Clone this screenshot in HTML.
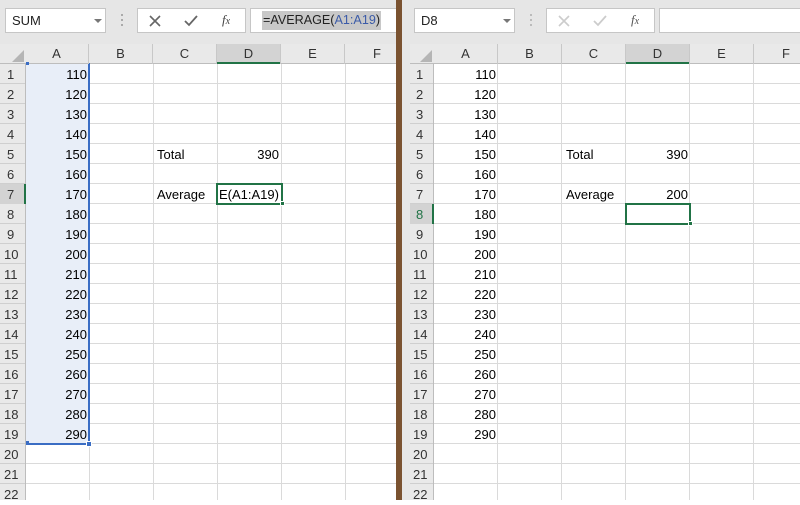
<!DOCTYPE html>
<html><head><meta charset="utf-8"><style>
*{margin:0;padding:0;box-sizing:border-box}
body{width:800px;height:500px;overflow:hidden;background:#fff;font-family:"Liberation Sans",sans-serif;font-size:13px;color:#000;position:relative}
.a{position:absolute}
.tb{background:#e6e6e6}
.box{position:absolute;background:#fff;border:1px solid #c6c6c6}
.hdr{position:absolute;background:#e9e9e9;color:#333;font-size:13px}
.grid{position:absolute;background-image:repeating-linear-gradient(to right,transparent 0 63px,#dadada 63px 64px),repeating-linear-gradient(to bottom,transparent 0 19px,#dadada 19px 20px)}
.n{position:absolute;width:60px;text-align:right;height:20px;line-height:21px}
.rh{position:absolute;height:20px;line-height:21px;font-size:13px;color:#333}
.ch{position:absolute;top:44px;height:20px;line-height:20px;text-align:center;width:64px;border-right:1px solid #c8c8c8;color:#333}
.t{position:absolute;height:20px;line-height:21px}
</style></head><body>
<div class="a tb" style="left:0;top:0;width:800px;height:44px"></div>
<div class="box" style="left:5px;top:8px;width:101px;height:25px"><span class="a" style="left:6px;top:4px;font-size:13px;color:#222">SUM</span><span class="a" style="left:88px;top:10px;border-left:4px solid transparent;border-right:4px solid transparent;border-top:4px solid #777"></span></div>
<div class="a" style="left:121px;top:14px;width:2px;height:14px;background:repeating-linear-gradient(to bottom,#aaa 0 2px,transparent 2px 5px)"></div>
<div class="box" style="left:137px;top:8px;width:109px;height:25px">
<svg class="a" style="left:11px;top:6px" width="12" height="12"><path d="M1 1L11 11M11 1L1 11" stroke="#666" stroke-width="1.6"/></svg>
<svg class="a" style="left:46px;top:6px" width="14" height="12"><path d="M1 6L5 10L13 1" stroke="#666" stroke-width="1.8" fill="none"/></svg>
<span class="a" style="left:84px;top:3px;font-family:'Liberation Serif',serif;font-style:italic;font-size:13px;color:#444">f<span style="font-size:10px">x</span></span></div>
<div class="box" style="left:250px;top:8px;width:150px;height:25px;overflow:hidden"><span class="a" style="left:11px;top:2px;background:#c8c8c8;font-size:12.6px;padding:0 1px;line-height:19px;color:#222;white-space:nowrap">=AVERAGE(<span style="color:#3b5ba8">A1:A19</span>)</span></div>

<div class="box" style="left:414px;top:8px;width:101px;height:25px"><span class="a" style="left:6px;top:4px;color:#222">D8</span><span class="a" style="left:88px;top:10px;border-left:4px solid transparent;border-right:4px solid transparent;border-top:4px solid #777"></span></div>
<div class="a" style="left:530px;top:14px;width:2px;height:14px;background:repeating-linear-gradient(to bottom,#bbb 0 2px,transparent 2px 5px)"></div>
<div class="box" style="left:546px;top:8px;width:109px;height:25px">
<svg class="a" style="left:11px;top:6px" width="12" height="12"><path d="M1 1L11 11M11 1L1 11" stroke="#ccc" stroke-width="1.6"/></svg>
<svg class="a" style="left:46px;top:6px" width="14" height="12"><path d="M1 6L5 10L13 1" stroke="#ccc" stroke-width="1.8" fill="none"/></svg>
<span class="a" style="left:84px;top:3px;font-family:'Liberation Serif',serif;font-style:italic;font-size:13px;color:#555">f<span style="font-size:10px">x</span></span></div>
<div class="box" style="left:659px;top:8px;width:150px;height:25px"></div>

<div class="hdr" style="left:0;top:44px;width:396px;height:20px;border-bottom:1px solid #bdbdbd"></div>
<div class="hdr" style="left:0;top:64px;width:26px;height:436px;border-right:1px solid #bdbdbd;background-image:repeating-linear-gradient(to bottom,transparent 0 19px,#cfcfcf 19px 20px)"></div>
<div class="a" style="left:12px;top:50px;border-left:12px solid transparent;border-bottom:12px solid #b5b5b5"></div>
<div class="grid" style="left:26px;top:64px;width:370px;height:436px"></div>
<div class="a" style="left:26px;top:64px;width:63px;height:379px;background:#e8eef8"></div>
<div class="a" style="left:88px;top:63px;width:2px;height:382px;background:#3a6dc4"></div>
<div class="a" style="left:26px;top:443px;width:64px;height:2px;background:#3a6dc4"></div>
<div class="a" style="left:86px;top:441px;width:6px;height:6px;background:#3a6dc4;border:1px solid #fff"></div>
<div class="a" style="left:26px;top:62px;width:3px;height:3px;background:#3a6dc4"></div>
<div class="a" style="left:26px;top:441px;width:3px;height:4px;background:#3a6dc4"></div>
<div class="a" style="left:217px;top:44px;width:64px;height:20px;background:#d3d3d3;border-bottom:2px solid #217346"></div>
<div class="a" style="left:0;top:184px;width:26px;height:20px;background:#d3d3d3;border-right:2px solid #217346"></div>
<div class="ch" style="left:25px">A</div><div class="ch" style="left:89px">B</div><div class="ch" style="left:153px">C</div><div class="ch" style="left:217px">D</div><div class="ch" style="left:281px">E</div><div class="ch" style="left:345px;border:none;width:64px">F</div>
<div class="a" style="left:396px;top:0;width:6px;height:500px;background:#7a5230"></div>

<div class="a tb" style="left:402px;top:44px;width:8px;height:456px"></div>
<div class="hdr" style="left:410px;top:44px;width:390px;height:20px;border-bottom:1px solid #bdbdbd"></div>
<div class="hdr" style="left:410px;top:64px;width:24px;height:436px;border-right:1px solid #bdbdbd;background-image:repeating-linear-gradient(to bottom,transparent 0 19px,#cfcfcf 19px 20px)"></div>
<div class="a" style="left:420px;top:50px;border-left:12px solid transparent;border-bottom:12px solid #b5b5b5"></div>
<div class="grid" style="left:434px;top:64px;width:366px;height:436px"></div>
<div class="a" style="left:626px;top:44px;width:64px;height:20px;background:#d3d3d3;border-bottom:2px solid #217346"></div>
<div class="a" style="left:410px;top:204px;width:24px;height:20px;background:#d3d3d3;border-right:2px solid #217346"></div>
<div class="ch" style="left:434px">A</div><div class="ch" style="left:498px">B</div><div class="ch" style="left:562px">C</div><div class="ch" style="left:626px">D</div><div class="ch" style="left:690px">E</div><div class="ch" style="left:754px;border:none">F</div>

<div class="a" style="left:216px;top:183px;width:67px;height:22px;border:2px solid #217346;background:#fff"></div>
<div class="t" style="left:219px;top:184px;width:62px;overflow:hidden;font-size:13px">E(A1:A19)</div>
<div class="a" style="left:280px;top:201px;width:5px;height:5px;background:#217346;border:1px solid #fff"></div>
<div class="a" style="left:625px;top:203px;width:66px;height:22px;border:2px solid #217346"></div>
<div class="a" style="left:688px;top:221px;width:5px;height:5px;background:#217346;border:1px solid #fff"></div>

<div class="t" style="left:157px;top:144px">Total</div><div class="n" style="left:219px;top:144px">390</div>
<div class="t" style="left:157px;top:184px">Average</div>
<div class="t" style="left:566px;top:144px">Total</div><div class="n" style="left:628px;top:144px">390</div>
<div class="t" style="left:566px;top:184px">Average</div><div class="n" style="left:628px;top:184px">200</div>

<div class="rh" style="left:7px;top:64px">1</div><div class="rh" style="left:7px;top:84px">2</div><div class="rh" style="left:7px;top:104px">3</div><div class="rh" style="left:7px;top:124px">4</div><div class="rh" style="left:7px;top:144px">5</div><div class="rh" style="left:7px;top:164px">6</div><div class="rh" style="left:7px;top:184px">7</div><div class="rh" style="left:7px;top:204px">8</div><div class="rh" style="left:7px;top:224px">9</div><div class="rh" style="left:4px;top:244px">10</div><div class="rh" style="left:4px;top:264px">11</div><div class="rh" style="left:4px;top:284px">12</div><div class="rh" style="left:4px;top:304px">13</div><div class="rh" style="left:4px;top:324px">14</div><div class="rh" style="left:4px;top:344px">15</div><div class="rh" style="left:4px;top:364px">16</div><div class="rh" style="left:4px;top:384px">17</div><div class="rh" style="left:4px;top:404px">18</div><div class="rh" style="left:4px;top:424px">19</div><div class="rh" style="left:4px;top:444px">20</div><div class="rh" style="left:4px;top:464px">21</div><div class="rh" style="left:4px;top:484px">22</div>

<div class="rh" style="left:416px;top:64px">1</div><div class="rh" style="left:416px;top:84px">2</div><div class="rh" style="left:416px;top:104px">3</div><div class="rh" style="left:416px;top:124px">4</div><div class="rh" style="left:416px;top:144px">5</div><div class="rh" style="left:416px;top:164px">6</div><div class="rh" style="left:416px;top:184px">7</div><div class="rh" style="left:416px;top:204px;color:#217346">8</div><div class="rh" style="left:416px;top:224px">9</div><div class="rh" style="left:413px;top:244px">10</div><div class="rh" style="left:413px;top:264px">11</div><div class="rh" style="left:413px;top:284px">12</div><div class="rh" style="left:413px;top:304px">13</div><div class="rh" style="left:413px;top:324px">14</div><div class="rh" style="left:413px;top:344px">15</div><div class="rh" style="left:413px;top:364px">16</div><div class="rh" style="left:413px;top:384px">17</div><div class="rh" style="left:413px;top:404px">18</div><div class="rh" style="left:413px;top:424px">19</div><div class="rh" style="left:413px;top:444px">20</div><div class="rh" style="left:413px;top:464px">21</div><div class="rh" style="left:413px;top:484px">22</div>

<div class="n" style="left:27px;top:64px">110</div><div class="n" style="left:27px;top:84px">120</div><div class="n" style="left:27px;top:104px">130</div><div class="n" style="left:27px;top:124px">140</div><div class="n" style="left:27px;top:144px">150</div><div class="n" style="left:27px;top:164px">160</div><div class="n" style="left:27px;top:184px">170</div><div class="n" style="left:27px;top:204px">180</div><div class="n" style="left:27px;top:224px">190</div><div class="n" style="left:27px;top:244px">200</div><div class="n" style="left:27px;top:264px">210</div><div class="n" style="left:27px;top:284px">220</div><div class="n" style="left:27px;top:304px">230</div><div class="n" style="left:27px;top:324px">240</div><div class="n" style="left:27px;top:344px">250</div><div class="n" style="left:27px;top:364px">260</div><div class="n" style="left:27px;top:384px">270</div><div class="n" style="left:27px;top:404px">280</div><div class="n" style="left:27px;top:424px">290</div>

<div class="n" style="left:436px;top:64px">110</div><div class="n" style="left:436px;top:84px">120</div><div class="n" style="left:436px;top:104px">130</div><div class="n" style="left:436px;top:124px">140</div><div class="n" style="left:436px;top:144px">150</div><div class="n" style="left:436px;top:164px">160</div><div class="n" style="left:436px;top:184px">170</div><div class="n" style="left:436px;top:204px">180</div><div class="n" style="left:436px;top:224px">190</div><div class="n" style="left:436px;top:244px">200</div><div class="n" style="left:436px;top:264px">210</div><div class="n" style="left:436px;top:284px">220</div><div class="n" style="left:436px;top:304px">230</div><div class="n" style="left:436px;top:324px">240</div><div class="n" style="left:436px;top:344px">250</div><div class="n" style="left:436px;top:364px">260</div><div class="n" style="left:436px;top:384px">270</div><div class="n" style="left:436px;top:404px">280</div><div class="n" style="left:436px;top:424px">290</div>
</body></html>
